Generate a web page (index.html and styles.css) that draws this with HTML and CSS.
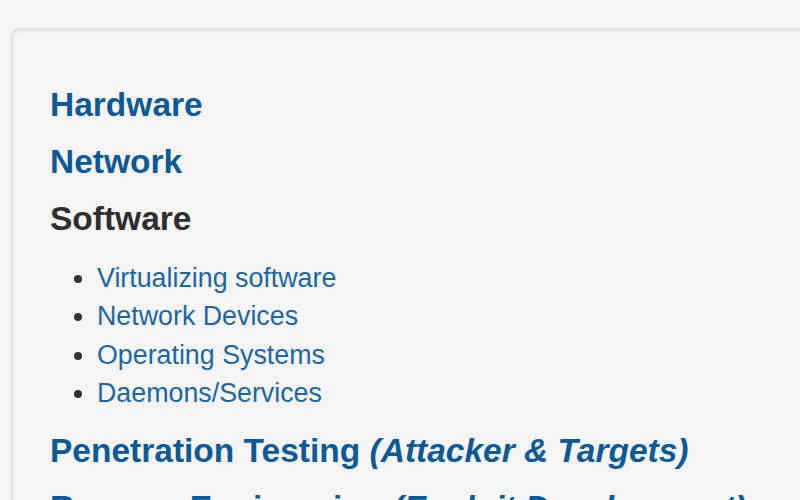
FILE: index.html
```html
<!DOCTYPE html>
<html>
<head>
<meta charset="utf-8">
<link rel="stylesheet" href="styles.css">
</head>
<body>
<div class="well">
  <ul class="topics">
    <li><h4><a href="#">Hardware</a></h4></li>
    <li><h4><a href="#">Network</a></h4></li>
    <li>
      <h4 class="current">Software</h4>
      <ul class="sub">
        <li><a href="#">Virtualizing software</a></li>
        <li><a href="#">Network Devices</a></li>
        <li><a href="#">Operating Systems</a></li>
        <li><a href="#">Daemons/Services</a></li>
      </ul>
    </li>
    <li><h4><a href="#">Penetration Testing <em>(Attacker &amp; Targets)</em></a></h4></li>
    <li><h4><a href="#">Reverse Engineering <em>(Exploit Development)</em></a></h4></li>
  </ul>
</div>
</body>
</html>
```

FILE: styles.css
```css
html, body {
  margin: 0;
  padding: 0;
  background: #f5f5f5;
  font-family: "Liberation Sans", Arial, sans-serif;
  color: #333;
  overflow: hidden;
}
body {
  padding: 28px 0 0 11px;
}
.well {
  width: 900px;
  min-height: 600px;
  box-sizing: border-box;
  padding: 37px;
  background: #f5f5f5;
  border: 2px solid #e3e3e3;
  border-radius: 8px;
  box-shadow: inset 0 2px 2px rgba(0,0,0,0.05);
}
.topics {
  list-style: none;
  margin: 0;
  padding: 0;
}
h4 {
  font-size: 33.5px;
  line-height: 38px;
  font-weight: bold;
  margin: 19px 0;
  white-space: nowrap;
}
h4 a {
  color: #0b5a95;
  text-decoration: none;
}
h4.current {
  color: #2e2e2e;
}
.sub {
  list-style: disc;
  margin: 0 0 18px;
  padding: 2px 0 0 47px;
  font-size: 26.8px;
  line-height: 38.4px;
}
.sub li::marker {
  color: #333;
}
.sub a {
  color: #1d66a2;
  text-decoration: none;
}
```
